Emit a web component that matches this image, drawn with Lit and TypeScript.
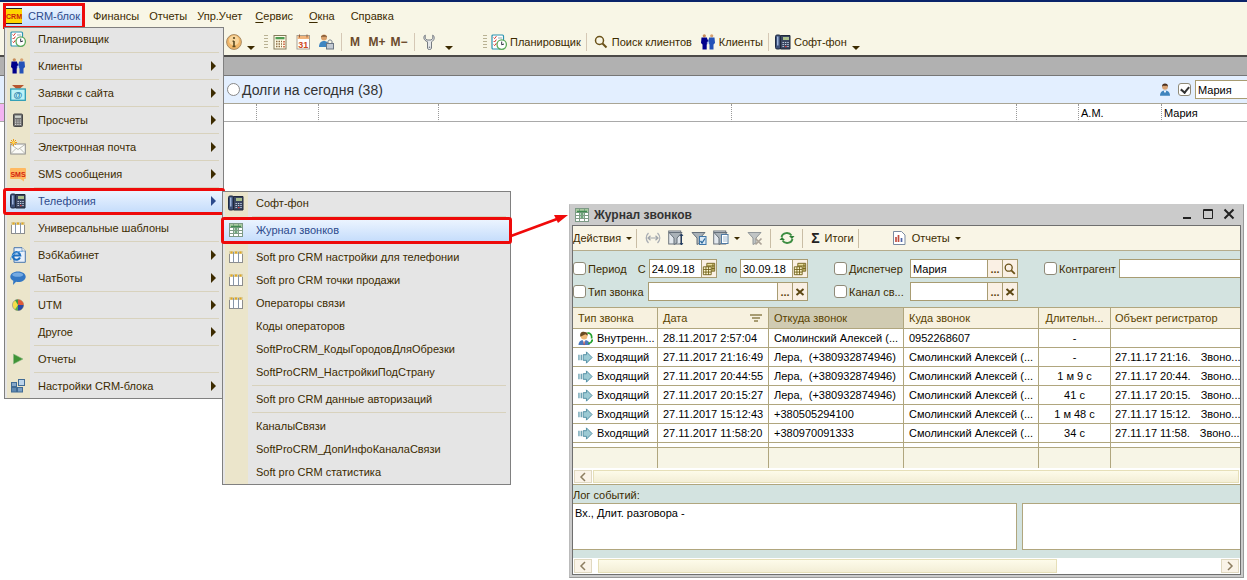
import { LitElement, html, svg, css, nothing, type TemplateResult } from "lit";
import { customElement } from "lit/decorators.js";
import { classMap } from "lit/directives/class-map.js";

const phone = svg`<rect x="0.5" y="1" width="5" height="14" rx="1.5" fill="#3c5078" stroke="#1f2a42"/><rect x="2" y="2.5" width="1.5" height="9" fill="#9fb6dc"/>
  <path d="M5.5 1.5h9.5v13.5H5.5z" fill="#3a4660" stroke="#20283a"/><rect x="8" y="3" width="6" height="3" fill="#a9bf8c"/>
  <path d="M7.5 8.5h7M7.5 10.5h7M7.5 12.5h7" stroke="#c3cfe4" stroke-width="1.2" stroke-dasharray="1.4 1"/><rect x="10" y="12" width="1.5" height="1.2" fill="#d33"/>`;
const columns = svg`<rect x="1.5" y="2.5" width="13" height="11" fill="#fff" stroke="#8d8d8d"/><rect x="1" y="2" width="14" height="3" fill="#d9cfa8"/><path d="M2.500 3.500h2M7 3.500h2M11.500 3.500h2" stroke="#e3a81f" stroke-width="2"/>
  <path d="M5.500 3v10.500M10.500 3v10.500" stroke="#8796a8"/>`;
const sheet = svg`<rect x="1.500" y="1.500" width="13" height="13" fill="#fff" stroke="#7d9a86"/><rect x="2" y="2" width="12" height="3" fill="#a9cba0"/>
  <path d="M5.500 2v12M10.500 2v12M2 5.500h12M2 8.500h12M2 11.500h12" stroke="#7f9c86"/><path d="M3 4.500h10M6.500 7h3M6.500 10h3" stroke="#3f8a4f" stroke-width="1.500"/>`;
const planner = svg`<rect x="1" y="1" width="11.5" height="14" rx="1" fill="#fff" stroke="#2b93b0" stroke-width="1.2"/><path d="M2.600 3.600l1 1 1.800-2.400M2.600 7l1 1 1.800-2.400M2.600 10.600l1 1 1.800-2.400" fill="none" stroke="#d63327"/>
  <path d="M7 4h4" stroke="#9aa"/><circle cx="10.700" cy="10.600" r="4.700" fill="#fff" stroke="#5aa858" stroke-width="1.300"/><path d="M10.700 7.600v3.200l2.300-.8" fill="none" stroke="#334"/>`;
const people = svg`<circle cx="4.300" cy="1.800" r="1.600" fill="#c78c58"/><circle cx="11.700" cy="1.800" r="1.600" fill="#d6a070"/><path d="M1.500 3.500h5.300l1.200 3v3l-1.300 1v5H2.500v-5L1 9z" fill="#00008c"/>
  <path d="M9.200 3.500h5.300L15 9l-1.500 1.500v5h-4v-5L8.200 9V6.500z" fill="#2452b8"/><path d="M8 7.500v3M6.800 9h2.400" stroke="#cfe0ff"/>`;
const funnel = svg`<path d="M1 2.500h13L9 8v5l-3 1.500V8z" fill="#aab2b8" stroke="#66707a"/>`;
const page = svg`<rect x="8.500" y="4.500" width="6.500" height="9" fill="#fff" stroke="#4f79a3"/><path d="M10 7h4M10 9h4M10 11h4" stroke="#8aa9c6" stroke-width=".8"/>`;
const lens = svg`<circle cx="6.500" cy="6.500" r="4" fill="none" stroke="#6b5218" stroke-width="1.500"/><path d="M9.500 9.500l4 4" stroke="#6b5218" stroke-width="2"/>`;
const man = svg`<circle cx="8" cy="4.300" r="3.300" fill="#d9a273"/><path d="M4.600 4.500C4.400 1.500 6 .6 8 .6s3.600.9 3.400 3.900L10.600 3H5.400z" fill="#4a2f1e"/><path d="M2.300 14.500c0-4 2.500-6 5.700-6s5.700 2 5.700 6z" fill="#3f84bd"/><path d="M6.300 8.600h3.400L8 11.600z" fill="#fff"/>`;

const icons: Record<string, TemplateResult> = {
  phone, columns, sheet, planner, people, lens, man,
  crm: svg`<rect width="16" height="16" fill="#ffd600"/><path d="M0 .5h16M0 15.500h16" stroke="#222"/><text x="8" y="10.500" text-anchor="middle" class="crm">CRM</text>`,
  mailSite: svg`<path d="M2 0h12l-4 3.500H6z" fill="#b7562e"/><rect x=".7" y="4" width="14.600" height="11.300" fill="#bdf2f7" stroke="#2c9db5" stroke-width="1.300"/><text x="8" y="13" text-anchor="middle" class="at">@</text>`,
  calcDark: svg`<rect x="3.500" y="2" width="9" height="12.500" rx="1" fill="#6f6f6f" stroke="#484848"/><rect x="5" y="3.500" width="6" height="2.400" fill="#ccd2cc"/><path d="M5 8h6M5 10.200h6M5 12.400h6" stroke="#d9d9d9" stroke-width="1.200" stroke-dasharray="1.300 1"/>`,
  mail: svg`<rect x=".7" y="5" width="14.600" height="10" fill="#fbfbf8" stroke="#8e8e8e"/><path d="M1 5.500l7 5 7-5M1 14.500l5-5M15 14.500l-5-5" fill="none" stroke="#a9a9a0" stroke-width=".8"/><path d="M3.500 0v7M0 3.500h7M1 1l5 5M6 1L1 6" stroke="#eb9b17"/><circle cx="3.500" cy="3.500" r="1.400" fill="#ffd75a"/>`,
  sms: svg`<path d="M1 2h14a1 1 0 011 1v9a1 1 0 01-1 1h-1v2.500L10.500 13H1a1 1 0 01-1-1V3a1 1 0 011-1z" fill="#ffb961"/><text x="8" y="10.700" text-anchor="middle" class="sms">SMS</text>`,
  explorer: svg`<path d="M4 .7h8l3.300 3.300v11.300H4z" fill="#e9f1fb" stroke="#4876ad"/><path d="M12 .7V4h3.300" fill="#fff" stroke="#4876ad" stroke-width=".7"/><path d="M10 10.500A3.800 3.800 0 1110.300 8.500H3" fill="none" stroke="#1d70c0" stroke-width="2"/><path d="M.8 13C-.5 9 8 3 12.500 4.500" fill="none" stroke="#62a7e2"/>`,
  bubble: svg`<path d="M8 1.500c4.500 0 7.700 2.300 7.700 5.200S12.500 12 8 12c-.7 0-1.300 0-1.900-.2L3 15l.3-4.200C1.400 9.800.3 8.400.3 6.700.3 3.800 3.500 1.500 8 1.500z" fill="#3478c4"/><ellipse cx="7.700" cy="4.700" rx="5.500" ry="2.100" fill="#86b8ea" opacity=".8"/>`,
  pie: svg`<circle cx="8" cy="8" r="5.600" fill="#f3df4b" stroke="#888" stroke-width=".6"/><path d="M8 8V2.400A5.600 5.600 0 0113.600 8z" fill="#e05a38"/><path d="M8 8h5.600A5.600 5.600 0 018 13.600z" fill="#2948a5"/><path d="M8 8L5 3.300A5.600 5.600 0 018 2.400z" fill="#3d9a46"/><path d="M8 8v5.600a5.600 5.600 0 01-3-1z" fill="#52ad55"/>`,
  play: svg`<path d="M3.500 3l9.500 5-9.500 5z" fill="#3f9436" stroke="#8ab884" stroke-width=".6"/>`,
  blocks: svg`<rect x="1.500" y="4.500" width="5" height="4" fill="#86a8c9" stroke="#416b94"/><rect x="8.500" y="1.500" width="6" height="6" fill="#bcd4ea" stroke="#416b94"/><rect x="1.500" y="9.500" width="5" height="4.500" fill="#5f88b0" stroke="#416b94"/><rect x="7.500" y="9.500" width="5" height="4.500" fill="#7ba0c4" stroke="#416b94"/>`,
  info: svg`<circle cx="8" cy="8" r="7.400" fill="#f2b768" stroke="#a78a63"/><circle cx="8" cy="6.500" r="5" fill="#fbe2b4" opacity=".7"/><path d="M8 7v5.500M6.600 7.300H8M6.500 12.500h3" stroke="#5b4a22" stroke-width="1.600"/><circle cx="8" cy="4" r="1.100" fill="#5b4a22"/>`,
  calc: svg`<rect x="2" y="1.500" width="12" height="13.500" fill="#fffbe6" stroke="#847a5a"/><rect x="3.500" y="3" width="9" height="2.300" fill="#4f9c52"/><path d="M4 7.500h6M4 10h6M4 12.500h6" stroke="#8c6d42" stroke-width="1.500" stroke-dasharray="1.500 1"/><path d="M12 7v6.500" stroke="#c65131" stroke-width="1.500" stroke-dasharray="1.500 1"/>`,
  calendar: svg`<rect x="2" y="1.500" width="12.500" height="13.500" fill="#fff" stroke="#a8a091"/><rect x="2.500" y="2" width="11.500" height="3" fill="#f2b57c"/><path d="M4.500.5v3M12 .5v3" stroke="#9a5f3a"/><text x="8.300" y="13.500" text-anchor="middle" class="day">31</text>`,
  users: svg`<circle cx="6" cy="3.600" r="3" fill="#d9a06a"/><path d="M3 3.500C3 .5 9 .5 9 3.500L8 2.500H4z" fill="#5a3c22"/><path d="M1 13c0-4 2-6 5-6s5 2 5 6z" fill="#3f86c2"/><rect x="8.500" y="9.500" width="7" height="5.500" fill="#c3cad3" stroke="#6b7683"/><path d="M10 9.500V7.500c0-2 4-2 4 0v2" fill="none" stroke="#6b7683"/>`,
  wrench: svg`<path d="M4.200 1v3.500L6 6h4l1.800-1.500V1c2 1.500 2.200 5-1.300 6.800v6.400c0 1.800-4 1.800-4 0V7.800C2 6 2.200 2.500 4.200 1z" fill="#e6e8ea" stroke="#757b82"/><circle cx="8.500" cy="13.300" r=".8" fill="#757b82"/>`,
  range: svg`<path d="M3.500 3C.5 6 .5 10 3.500 13M12.500 3c3 3 3 7 0 10" fill="none" stroke="#a9adb3" stroke-width="1.300"/><path d="M3 8h10M5.500 5.800L3 8l2.500 2.200M10.500 5.800L13 8l-2.500 2.200" fill="none" stroke="#a0a5ac" stroke-width="1.200"/>`,
  filterSort: svg`<rect x=".7" y="1" width="12" height="13" fill="#e4e9ee" stroke="#6d747c"/>${funnel}<path d="M13.500 4v11M12 6l1.500-2L15 6M12 13l1.500 2 1.500-2" fill="none" stroke="#243d61"/>`,
  filterNew: svg`${funnel}<rect x="8.500" y="6.500" width="6.500" height="8" fill="#dbe9f5" stroke="#3e76a8"/><path d="M9.500 11l1.500 2 3-4.500" fill="none" stroke="#2d6a9c" stroke-width="1.300"/>`,
  filterList: svg`<rect x=".7" y="1" width="12" height="13" fill="#e4e9ee" stroke="#6d747c"/>${funnel}${page}`,
  filterOff: svg`<g opacity=".7">${funnel}<path d="M8.500 8.500l6 6M14.500 8.500l-6 6" stroke="#8b8178" stroke-width="1.700"/></g>`,
  refresh: svg`<path d="M2.500 7C3.500 2.500 10 1.500 12.500 5.500M13.500 9c-1 4.500-7.500 5.500-10 1.500" fill="none" stroke="#3c8d41" stroke-width="1.800"/><path d="M10 6h5.500L13 9zM6 10H.5L3 7z" fill="#2f7f36"/>`,
  chart: svg`<path d="M2.500 1.500h8l3.500 3.500v9.500H2.500z" fill="#fff" stroke="#7b8ba0"/><path d="M5 12V7M7.500 12V5" stroke="#c24d3f" stroke-width="1.700"/><path d="M10.500 12V8" stroke="#5065a8" stroke-width="1.700"/>`,
  dates: svg`<path d="M5.500 1.500h9v9h-9z" fill="#eadf9d" stroke="#6b5a12"/><path d="M1.500 5.500h9v9h-9z" fill="#fff9d0" stroke="#6b5a12"/><path d="M1.500 8.500h9M1.500 11.500h9M4.500 5.500v9M7.500 5.500v9M6 4.500h8M11 7.500h3.500M12.500 2v8" stroke="#6b5a12"/>`,
  cross: svg`<path d="M4 4.500l8 7M12 4.500l-8 7" stroke="#5b4510" stroke-width="2.200"/>`,
  incoming: svg`<path d="M1 5v6M3.500 5v6" stroke="#6ea3b4" stroke-width="1.500"/><path d="M5.500 5h3.500V2l6 6-6 6v-3H5.500z" fill="#9ccad4" stroke="#4d8ba0"/>`,
  internal: svg`<circle cx="6.500" cy="5.500" r="3.500" fill="#efb978"/><path d="M2.500 6C1.500 1 5 .5 7 1c3 0 4 2 3.200 4L8 3.500z" fill="#6b4a22"/><path d="M.5 15c0-3.500 2-5.500 6-5.500s6 2 6 5.500z" fill="#4a78bd"/><path d="M5 9.500h3l-1.500 5z" fill="#fff"/><path d="M6.500 11v4" stroke="#cc3a2c"/><path d="M10 2c3.500 0 5 2.500 4.500 6M15.500 9c-.5 3-2 4-4.500 4.500" fill="none" stroke="#24a12d" stroke-width="1.800"/>`,
};

const icon = (name: string, size = 16) =>
  html`<svg class="icon" width=${size} height=${size} viewBox="0 0 16 16" aria-hidden="true">${icons[name]}</svg>`;

interface Entry { label: string; icon?: string; sub?: boolean; active?: boolean; line?: boolean }

const mainEntries: Entry[] = [
  { label: "Планировщик", icon: "planner", line: true },
  { label: "Клиенты", icon: "people", sub: true, line: true },
  { label: "Заявки с сайта", icon: "mailSite", sub: true, line: true },
  { label: "Просчеты", icon: "calcDark", sub: true, line: true },
  { label: "Электронная почта", icon: "mail", sub: true, line: true },
  { label: "SMS сообщения", icon: "sms", sub: true, line: true },
  { label: "Телефония", icon: "phone", sub: true, active: true, line: true },
  { label: "Универсальные шаблоны", icon: "columns", line: true },
  { label: "ВэбКабинет", icon: "explorer", sub: true },
  { label: "ЧатБоты", icon: "bubble", sub: true, line: true },
  { label: "UTM", icon: "pie", sub: true, line: true },
  { label: "Другое", sub: true, line: true },
  { label: "Отчеты", icon: "play", line: true },
  { label: "Настройки CRM-блока", icon: "blocks", sub: true },
];
const phoneEntries: Entry[] = [
  { label: "Софт-фон", icon: "phone", line: true },
  { label: "Журнал звонков", icon: "sheet", active: true, line: true },
  { label: "Soft pro CRM настройки для телефонии", icon: "columns" },
  { label: "Soft pro CRM точки продажи", icon: "columns" },
  { label: "Операторы связи", icon: "columns" },
  { label: "Коды операторов" },
  { label: "SoftProCRM_КодыГородовДляОбрезки" },
  { label: "SoftProCRM_НастройкиПодСтрану", line: true },
  { label: "Soft pro CRM данные авторизаций", line: true },
  { label: "КаналыСвязи" },
  { label: "SoftProCRM_ДопИнфоКаналаСвязи" },
  { label: "Soft pro CRM статистика" },
];

const base = css`
  * { box-sizing: border-box; }
  button, input, textarea { font: inherit; color: inherit; margin: 0; border-radius: 0; }
  button { border: 0; padding: 0; background: none; white-space: nowrap; }
  .icon { flex: none; display: block; }
  .crm { font: bold 7px "Liberation Sans", sans-serif; fill: #c81e0e; }
  .at { font: bold 9px "Liberation Sans", sans-serif; fill: #1c7aa8; }
  .sms { font: bold 7px "Liberation Sans", sans-serif; fill: #d41f10; }
  .day { font: bold 9px "Liberation Sans", sans-serif; fill: #cf4a22; }
  .check { appearance: none; flex: none; width: 13px; height: 13px; background: #fff; border: 1px solid #8f8a78; border-radius: 3px; display: grid; place-items: center; }
  .check:checked::after { content: ""; width: 4px; height: 6px; border: solid #333; border-width: 0 2px 2px 0; transform: rotate(40deg); margin-bottom: 2px; }
  .drop { border: solid transparent; border-width: 4px 4px 0; border-top-color: #3c2b00; flex: none; }
`;

@customElement("drop-menu")
class DropMenu extends LitElement {
  static properties = { entries: { attribute: false } };
  declare entries: Entry[];
  static styles = [base, css`
    :host { display: block; border: 1px solid #808080; background: linear-gradient(90deg, #e5e5e5 0 2px, #ebe5cb 2px 25px, #e5e5e5 25px); color: #3c2b00; }
    ul { list-style: none; margin: 0; padding: 0; }
    .entry { display: grid; grid-template-columns: 27px 1fr 12px; align-items: center; width: 100%; height: 23px; padding: 0 0 2px 5px; text-align: left; }
    .label { grid-column: 2; padding-left: 1px; }
    .icon { grid-row: 1; }
    .arrow { border: solid transparent; border-width: 5px 0 5px 5px; border-left-color: currentColor; width: 5px; }
    .active { background: linear-gradient(#edf5ff, #c4dcfb); color: #2c4a8c; outline: 3px solid #ee0a0a; outline-offset: -1px; border-radius: 1px; position: relative; }
    .line { height: 4px; margin: 0 4px 0 29px; border: solid transparent; border-width: 1px 0 2px; background: #d8d2bd content-box; background-clip: padding-box; }
  `];
  render() {
    return html`<ul role="menu">${this.entries.map((e) => html`
      <li role="none"><button role="menuitem" class=${classMap({ entry: true, active: !!e.active })}>
        ${e.icon ? icon(e.icon) : nothing}<span class="label">${e.label}</span>${e.sub ? html`<span class="arrow"></span>` : nothing}
      </button></li>
      ${e.line ? html`<li role="separator" class="line"></li>` : nothing}`)}</ul>`;
  }
}

const calls = [
  ["Внутренн...", "28.11.2017 2:57:04", "Смолинский Алексей (...", "0952268607", "-", "", ""],
  ["Входящий", "27.11.2017 21:16:49", "Лера,  (+380932874946)", "Смолинский Алексей (...", "-", "27.11.17 21:16.", "Звоно..."],
  ["Входящий", "27.11.2017 20:44:55", "Лера,  (+380932874946)", "Смолинский Алексей (...", "1 м 9 с", "27.11.17 20:44.", "Звоно..."],
  ["Входящий", "27.11.2017 20:15:27", "Лера,  (+380932874946)", "Смолинский Алексей (...", "41 с", "27.11.17 20:15.", "Звоно..."],
  ["Входящий", "27.11.2017 15:12:43", "+380505294100", "Смолинский Алексей (...", "1 м 48 с", "27.11.17 15:12.", "Звоно..."],
  ["Входящий", "27.11.2017 11:58:20", "+380970091333", "Смолинский Алексей (...", "34 с", "27.11.17 11:58.", "Звоно..."],
];

@customElement("call-journal")
class CallJournal extends LitElement {
  static styles = [base, css`
    :host { display: block; background: #cbcbcb; border: 1px solid #999; border-top-color: #cbcbcb; border-left-color: #bbb; padding: 0 2px 2px; color: #3c2b00; }
    .title { display: flex; align-items: center; height: 20px; padding: 0 6px 0 2px; gap: 4px; }
    h2 { font-size: 12px; margin: 0; flex: 1; color: #333; }
    .frame { display: flex; gap: 9px; color: #222; }
    .body { border: 1px solid #6f6f6f; background: #d3e3e0; overflow: hidden; }
    .bar { display: flex; align-items: center; height: 25px; background: #f9f5e6; border-bottom: 1px solid #b5ac8c; }
    .bar button { display: flex; align-items: center; gap: 5px; height: 20px; }
    .tool { width: 23px; justify-content: center; }
    .wide { width: 33px; }
    .sep { width: 1px; height: 19px; background: #c9bda5; margin: 0 4px; }
    .small { border-width: 3px 3px 0; }
    .totals { margin-left: 4px; }
    .sigma { font-size: 14px; font-weight: bold; color: #222; }
    .reports { margin-left: 28px; }
    .filters { display: grid; grid-template-columns: 235px 184px 1fr; gap: 4px 26px; padding: 8px 0 6px; }
    .set { display: flex; align-items: center; height: 19px; }
    .set label { padding: 0 3px 0 2px; white-space: nowrap; }
    .set .push { margin-left: auto; }
    .field { display: flex; height: 19px; border: 1px solid #a89c72; background: #fff; color: #000; }
    .field input { border: 0; padding: 0 2px; width: 100%; min-width: 0; background: none; outline: 0; }
    .field button { width: 15px; flex: none; border-left: 1px solid #a89c72; background: #faf0e4; color: #5b4510; display: grid; place-items: center; font-weight: bold; }
    .date { width: 68px; }
    .type { width: 160px; }
    .agent { width: 108px; }
    .grow { flex: 1; border-right: 0; }
    table { border-collapse: separate; border-spacing: 0; table-layout: fixed; width: 100%; background: #fff; border-top: 1px solid #b0a67e; }
    th, td { border: solid #b0a67e; border-width: 0 1px 1px 0; padding: 0 0 0 5px; height: 19px; text-align: left; font-weight: normal; white-space: pre; overflow: hidden; line-height: 18px; }
    th:last-child, td:last-child { border-right: 0; padding-left: 4px; }
    th { height: 21px; background: #f7f1df; color: #5a4300; line-height: 20px; }
    td { color: #000; }
    .sorted { background: #d0cbb2; }
    .cell { display: flex; align-items: center; justify-content: space-between; padding-right: 6px; }
    .kind { justify-content: flex-start; gap: 4px; padding: 0; }
    .mid { text-align: center; padding: 0; }
    .pair { display: flex; gap: 10px; }
    .stub td { height: 5px; line-height: 0; padding: 0; }
    .foot td { height: 20px; background: #f7f5e6; border-bottom: 0; }
    .c1 { width: 85px; } .c2 { width: 111px; } .c3 { width: 135px; } .c4 { width: 135px; } .c5 { width: 72px; }
    .scroll { display: flex; gap: 1px; padding: 2px 1px 1px; background: #fff; height: 16px; }
    .scroll button { width: 18px; display: grid; place-items: center; background: #faf3e8; border: 1px solid #e0d8c0; color: #8d7d60; }
    .thumb { flex: 1; background: linear-gradient(#fdfbea, #f3eed6); border: 1px solid #e6dfb8; }
    .outer { padding: 1px; gap: 6px; }
    .outer .thumb { flex: none; width: 69%; }
    .outer .last { margin-left: auto; }
    .caption { display: block; height: 19px; line-height: 20px; border-top: 1px solid #b0a67e; }
    .logs { display: grid; grid-template-columns: 444px 1fr; gap: 5px; padding-bottom: 8px; }
    textarea { display: block; width: 100%; height: 47px; resize: none; border: 1px solid #b0a67e; background: #fff; color: #000; padding: 2px; outline: 0; overflow: hidden; }
    .logs > :first-child { border-left: 0; }
    .logs > :last-child { border-right: 0; }
  `];
  private chevron(left: boolean) {
    return html`<svg width="8" height="10" viewBox="0 0 8 10"><path d=${left ? "M6 1L2 5l4 4" : "M2 1l4 4-4 4"} fill="none" stroke="currentColor" stroke-width="1.500"/></svg>`;
  }
  render() {
    return html`
      <header class="title">${icon("sheet")}<h2>Журнал звонков</h2>
        <div class="frame">
          <button aria-label="Свернуть"><svg width="12" height="12"><path d="M2 10h8" stroke="currentColor" stroke-width="2"/></svg></button>
          <button aria-label="Развернуть"><svg width="12" height="12"><path d="M1.500 1.500h9v9h-9zM1 2.500h10" fill="none" stroke="currentColor"/></svg></button>
          <button aria-label="Закрыть"><svg width="12" height="12"><path d="M1.500 1.500l9 9M10.500 1.500l-9 9" stroke="currentColor" stroke-width="2"/></svg></button>
        </div>
      </header>
      <div class="body">
        <div class="bar">
          <button>Действия<span class="drop small"></span></button><span class="sep"></span>
          <button class="tool" aria-label="Интервал">${icon("range")}</button>
          <button class="tool" aria-label="Отбор">${icon("filterSort")}</button>
          <button class="tool" aria-label="Отбор по значению">${icon("filterNew")}</button>
          <button class="tool wide" aria-label="История отборов">${icon("filterList")}<span class="drop small"></span></button>
          <button class="tool" aria-label="Отключить отбор">${icon("filterOff")}</button><span class="sep"></span>
          <button class="tool" aria-label="Обновить">${icon("refresh")}</button><span class="sep"></span>
          <button class="totals"><span class="sigma">Σ</span>Итоги</button><span class="sep"></span>
          <button class="reports">${icon("chart")}Отчеты<span class="drop small"></span></button>
        </div>
        <form class="filters">
          <div class="set"><input class="check" type="checkbox" id="period"><label for="period">Период</label>
            <label class="push" for="from">С</label><span class="field date"><input id="from" value="24.09.18"><button type="button" aria-label="Выбрать">${icon("dates", 14)}</button></span>
            <label class="push" for="to">по</label><span class="field date"><input id="to" value="30.09.18"><button type="button" aria-label="Выбрать">${icon("dates", 14)}</button></span></div>
          <div class="set"><input class="check" type="checkbox" id="disp"><label for="disp">Диспетчер</label>
            <span class="field agent push"><input aria-label="Диспетчер" value="Мария"><button type="button">...</button><button type="button" aria-label="Найти">${icon("lens", 14)}</button></span></div>
          <div class="set"><input class="check" type="checkbox" id="contr"><label for="contr">Контрагент</label>
            <span class="field grow"><input aria-label="Контрагент"></span></div>
          <div class="set"><input class="check" type="checkbox" id="type"><label for="type">Тип звонка</label>
            <span class="field type push"><input aria-label="Тип звонка"><button type="button">...</button><button type="button" aria-label="Очистить">${icon("cross", 14)}</button></span></div>
          <div class="set"><input class="check" type="checkbox" id="chan"><label for="chan">Канал св...</label>
            <span class="field agent push"><input aria-label="Канал связи"><button type="button">...</button><button type="button" aria-label="Очистить">${icon("cross", 14)}</button></span></div>
        </form>
        <table>
          <colgroup><col class="c1"><col class="c2"><col class="c3"><col class="c4"><col class="c5"><col></colgroup>
          <thead><tr><th>Тип звонка</th>
            <th><div class="cell">Дата<svg width="12" height="8"><path d="M0 1h12M2 4h8M4 7h4" stroke="#a89c72" stroke-width="2"/></svg></div></th>
            <th class="sorted">Откуда звонок</th><th>Куда звонок</th><th class="mid">Длительн...</th><th>Объект регистратор</th></tr></thead>
          <tbody>
            ${calls.map((c, i) => html`<tr>
              <td><div class="cell kind">${icon(i ? "incoming" : "internal", 15)}${c[0]}</div></td>
              <td>${c[1]}</td><td>${c[2]}</td><td>${c[3]}</td><td class="mid">${c[4]}</td>
              <td><div class="pair"><span>${c[5]}</span><span>${c[6]}</span></div></td></tr>`)}
            <tr class="stub"><td></td><td></td><td></td><td></td><td></td><td></td></tr>
          </tbody>
          <tfoot><tr class="foot"><td></td><td></td><td></td><td></td><td></td><td></td></tr></tfoot>
        </table>
        <div class="scroll"><button aria-label="Влево">${this.chevron(true)}</button><span class="thumb"></span></div>
        <label class="caption" for="log">Лог событий:</label>
        <div class="logs"><textarea id="log">Вх., Длит. разговора -</textarea><textarea aria-label="Описание"></textarea></div>
        <div class="scroll outer"><button aria-label="Влево">${this.chevron(true)}</button><span class="thumb"></span><button class="last" aria-label="Вправо">${this.chevron(false)}</button></div>
      </div>`;
  }
}

@customElement("app-root")
class AppRoot extends LitElement {
  static styles = [base, css`
    :host { display: block; position: relative; min-height: 100vh; overflow: hidden; background: #fff; font: 11px/14px "Liberation Sans", Arial, sans-serif; color: #3c2b00; }
    .top { border-top: 2px solid #0a246a; background: #f8f6e6; border-bottom: 2px solid #4c4a48; }
    .menubar { display: flex; align-items: center; height: 27px; padding-left: 6px; gap: 10px; }
    .menubar a { color: inherit; text-decoration: none; }
    .menubar u { text-underline-offset: 2px; }
    .crmtab { display: flex; align-items: center; gap: 6px; height: 20px; width: 76px; outline: 3px solid #ee0a0a; background: linear-gradient(#edf5ff, #c4dcfb); color: #2c4a8c; margin-right: 1px; }
    .spaced { padding: 0 3px; }
    .tools { display: flex; align-items: center; height: 26px; padding-left: 226px; }
    .tools button { display: flex; align-items: center; gap: 3px; height: 22px; }
    .tools .tool { width: 23px; justify-content: center; }
    .more { margin: 12px 5px 0; }
    .grip { width: 4px; height: 14px; margin-left: 4px; background: repeating-linear-gradient(#b9b294 0 1px, transparent 1px 3px); }
    .sep { width: 1px; height: 18px; background: #d5c8b5; margin: 0 2px 0 4px; }
    .tools .mem { width: 22px; font-weight: bold; color: #6b4a2c; font-size: 12px; }
    .second { margin-left: 21px; display: flex; align-items: center; }
    .second .grip { margin-right: 4px; }
    .second .sep { margin: 0 6px 0 5px; }
    .next { margin-left: 8px; }
    .gray { height: 19px; background: #b1b1b1; border-bottom: 1px solid #777; }
    .debts { display: flex; align-items: center; gap: 6px; height: 28px; padding: 0 0 0 227px; background: #e3efff; border-bottom: 1px solid #a9a595; color: #333; }
    .radio { appearance: none; width: 13px; height: 13px; margin: 0; border: 1px solid #888; border-radius: 50%; background: #fff; flex: none; }
    .debts label { font-size: 14px; margin-right: auto; margin-left: -4px; }
    .who { width: 52px; height: 19px; border: 1px solid #a89c72; border-right: 0; background: #fff; color: #000; padding: 0 2px; outline: 0; margin-left: -2px; }
    .strip { width: 100%; border-collapse: separate; border-spacing: 0; table-layout: fixed; color: #000; }
    .strip td { height: 18px; padding: 2px 2px 0; border-bottom: 1px solid #a9a9a9; border-right: 1px dotted #999; line-height: 15px; }
    .strip td:last-child { border-right: 0; }
    .strip .pink { background: #f2b3f2; }
    .s0 { width: 6px; } .s1 { width: 251px; } .s2 { width: 62px; } .s3 { width: 120px; } .s4 { width: 293px; } .s6 { width: 62px; } .s7 { width: 83px; } .s8 { width: 85px; }
    .main { position: absolute; left: 4px; top: 27px; width: 220px; }
    .phone { position: absolute; left: 222px; top: 191px; width: 289px; }
    .window { position: absolute; left: 569px; right: 3px; top: 204px; }
    .pointer { position: absolute; left: 509px; top: 206px; }
  `];
  render() {
    return html`
      <header class="top">
        <nav class="menubar">
          <button class="crmtab">${icon("crm")}CRM-блок</button>
          <a href="#">Финансы</a><a href="#">Отчеты</a><a href="#">Упр.Учет</a>
          <a href="#" class="spaced"><u>С</u>ервис</a><a href="#" class="spaced"><u>О</u>кна</a><a href="#" class="spaced">Сп<u>р</u>авка</a>
        </nav>
        <div class="tools">
          <button aria-label="Справка">${icon("info")}</button><span class="drop more"></span>
          <span class="grip"></span>
          <button class="tool" aria-label="Калькулятор">${icon("calc")}</button>
          <button class="tool" aria-label="Календарь">${icon("calendar")}</button>
          <button class="tool" aria-label="Пользователи">${icon("users")}</button><span class="sep"></span>
          <button class="tool mem">M</button><button class="tool mem">M+</button><button class="tool mem">M−</button><span class="sep"></span>
          <button class="tool" aria-label="Настройки">${icon("wrench")}</button><span class="drop more"></span>
          <div class="second"><span class="grip"></span>
            <button>${icon("planner")}Планировщик</button><span class="sep"></span>
            <button>${icon("lens")}Поиск клиентов</button>
            <button class="next">${icon("people")}Клиенты</button><span class="sep"></span>
            <button>${icon("phone")}Софт-фон</button><span class="drop more"></span>
          </div>
        </div>
      </header>
      <div class="gray"></div>
      <div class="debts">
        <input class="radio" type="radio" id="debts"><label for="debts">Долги на сегодня (38)</label>
        ${icon("man", 14)}<input class="check" type="checkbox" aria-label="Отбор по сотруднику" checked><input class="who" aria-label="Сотрудник" value="Мария">
      </div>
      <table class="strip">
        <colgroup><col class="s0"><col class="s1"><col class="s2"><col class="s3"><col class="s4"><col><col class="s6"><col class="s7"><col class="s8"></colgroup>
        <tbody><tr><td class="pink"></td><td></td><td></td><td></td><td></td><td></td><td></td><td>А.М.</td><td>Мария</td></tr></tbody>
      </table>
      <drop-menu class="main" .entries=${mainEntries}></drop-menu>
      <drop-menu class="phone" .entries=${phoneEntries}></drop-menu>
      <call-journal class="window"></call-journal>
      <svg class="pointer" width="62" height="34" aria-hidden="true"><path d="M2 30L48 13" stroke="#f00a0a" stroke-width="2.500"/><path d="M59 9L45 9l4 8z" fill="#f00a0a"/></svg>`;
  }
}
